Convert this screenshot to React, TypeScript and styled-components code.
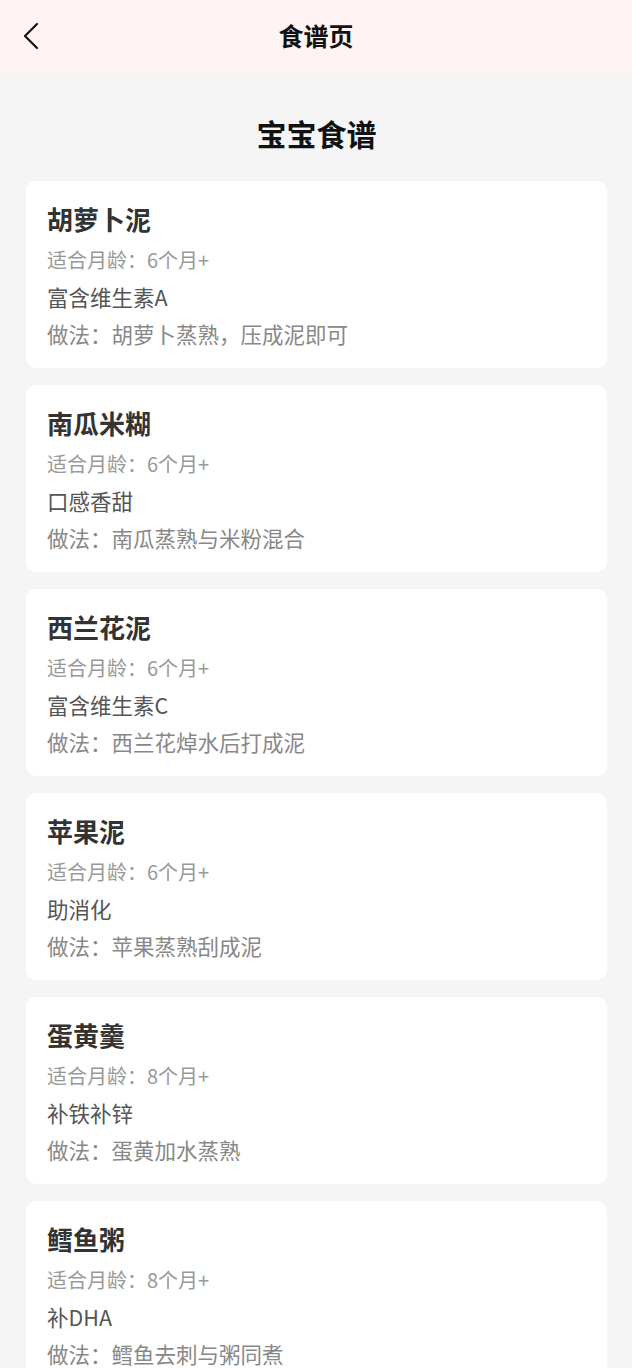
import React from 'react'
import styled, { createGlobalStyle } from 'styled-components'

const GlobalStyle = createGlobalStyle`
  html, body {
    margin: 0;
    padding: 0;
    background: #f5f5f5;
    font-family: "Noto Sans CJK SC", "Noto Sans", sans-serif;
  }
`

const RECIPES = [
  { name: '胡萝卜泥', age: '6个月+', desc: '富含维生素A', method: '胡萝卜蒸熟，压成泥即可' },
  { name: '南瓜米糊', age: '6个月+', desc: '口感香甜', method: '南瓜蒸熟与米粉混合' },
  { name: '西兰花泥', age: '6个月+', desc: '富含维生素C', method: '西兰花焯水后打成泥' },
  { name: '苹果泥', age: '6个月+', desc: '助消化', method: '苹果蒸熟刮成泥' },
  { name: '蛋黄羹', age: '8个月+', desc: '补铁补锌', method: '蛋黄加水蒸熟' },
  { name: '鳕鱼粥', age: '8个月+', desc: '补DHA', method: '鳕鱼去刺与粥同煮' },
]

const Page = styled.div`
  min-height: 100vh;
  background: #f5f5f5;
`

const NavBar = styled.header`
  position: relative;
  height: 72px;
  box-sizing: border-box;
  padding-bottom: 3px;
  background: #fff4f3;
  display: flex;
  align-items: center;
  justify-content: center;
`

const BackButton = styled.button`
  position: absolute;
  left: 16px;
  top: 20px;
  width: 30px;
  height: 32px;
  padding: 0;
  border: none;
  background: none;
  display: flex;
  align-items: center;
  justify-content: center;
  cursor: pointer;
`

const NavTitle = styled.h1`
  margin: 0;
  font-size: 25px;
  font-weight: 700;
  color: #111;
`

const Content = styled.main`
  padding: 0 25px 24px 26px;
`

const PageTitle = styled.h2`
  margin: 0;
  padding: 40px 0 27px;
  text-align: center;
  font-size: 30px;
  line-height: 42px;
  font-weight: 700;
  color: #111;
`

const List = styled.div`
  display: flex;
  flex-direction: column;
  gap: 17px;
`

const Card = styled.section`
  background: #fff;
  border-radius: 10px;
  padding: 19px 21px 16px;
`

const Name = styled.h3`
  margin: 0 0 3px;
  font-size: 26px;
  line-height: 38px;
  font-weight: 700;
  color: #333;
`

const Line = styled.p<{ tone: 'age' | 'desc' | 'method' }>`
  margin: 0;
  line-height: 37px;
  font-size: ${({ tone }) => (tone === 'age' ? '20px' : '21.5px')};
  color: ${({ tone }) => (tone === 'age' ? '#999' : tone === 'desc' ? '#555' : '#888')};
`

function App() {
  return (
    <>
      <GlobalStyle />
      <Page>
        <NavBar>
          <BackButton aria-label="返回">
            <svg width="18" height="28" viewBox="0 0 18 28" fill="none">
              <path d="M15 2 L3 14 L15 26" stroke="#111" strokeWidth="2.2" strokeLinecap="round" strokeLinejoin="round" />
            </svg>
          </BackButton>
          <NavTitle>食谱页</NavTitle>
        </NavBar>
        <Content>
          <PageTitle>宝宝食谱</PageTitle>
          <List>
            {RECIPES.map((r) => (
              <Card key={r.name}>
                <Name>{r.name}</Name>
                <Line tone="age">适合月龄：{r.age}</Line>
                <Line tone="desc">{r.desc}</Line>
                <Line tone="method">做法：{r.method}</Line>
              </Card>
            ))}
          </List>
        </Content>
      </Page>
    </>
  )
}

export default App
